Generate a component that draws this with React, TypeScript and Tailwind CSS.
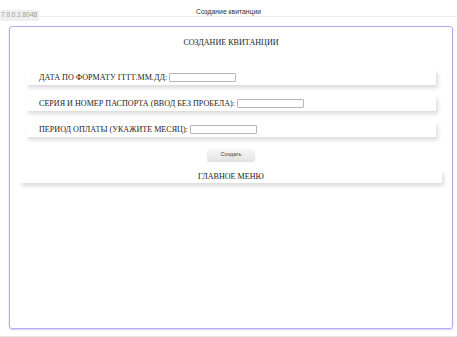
import React from "react";

const serif = { fontFamily: '"Liberation Serif", "Times New Roman", serif' };

function FieldRow({ label, inputW }: { label: string; inputW: string }) {
  return (
    <div className="mx-[16px] flex h-[15px] items-center bg-white pl-[13px] shadow-[2px_3px_4px_rgba(0,0,0,0.14)]">
      <span className="text-[8.1px] leading-none text-[#222]">{label}</span>
      <input
        type="text"
        className={`ml-[2px] h-[9px] ${inputW} rounded-[1px] border border-[#b5b5b5] bg-white outline-none`}
      />
    </div>
  );
}

export default function App() {
  return (
    <div className="flex h-[337px] w-[457px] flex-col overflow-hidden bg-white" style={serif}>
      {/* browser-ish header */}
      <div
        className="grid h-[17px] shrink-0 grid-cols-[1fr_auto_1fr] items-center border-b border-[#ececec]"
        style={{ fontFamily: '"Liberation Sans", Arial, sans-serif' }}
      >
        <div>
          <span className="inline-block rounded-[2px] bg-[#efefef] py-[2px] pl-[1px] pr-[2px] text-[6.5px] leading-none text-[#9a9a9a]">
            7.0.0.1:8048
          </span>
        </div>
        <span className="text-[6.8px] leading-none text-[#333]">Создание квитанции</span>
        <div />
      </div>

      <div className="ml-[9px] mr-[4px] mt-[9px] h-[303px] shrink-0 rounded-[3px] border border-[#b6a9f2] shadow-[0_1px_2px_rgba(120,100,220,0.35)]">
        <div className="pt-[12px] text-center text-[8.1px] leading-none text-[#222]">
          СОЗДАНИЕ КВИТАНЦИИ
        </div>

        <div className="mt-[23px] flex flex-col gap-[11px]">
          <FieldRow label="ДАТА ПО ФОРМАТУ ГГГГ.ММ.ДД:" inputW="w-[67px]" />
          <FieldRow label="СЕРИЯ И НОМЕР ПАСПОРТА (ВВОД БЕЗ ПРОБЕЛА):" inputW="w-[67px]" />
          <FieldRow label="ПЕРИОД ОПЛАТЫ (УКАЖИТЕ МЕСЯЦ):" inputW="w-[67px]" />
        </div>

        <div className="mt-[12px] flex justify-center">
          <button
            className="h-[12px] w-[48px] rounded-[2px] bg-gradient-to-b from-[#f7f7f7] to-[#e3e3e3] text-[5.5px] leading-none text-[#444] shadow-[0_1px_1px_rgba(0,0,0,0.12)]"
            style={{ fontFamily: '"Liberation Sans", Arial, sans-serif' }}
          >
            Создать
          </button>
        </div>

        <div className="mx-[10px] mt-[9px] flex h-[13px] items-center justify-center bg-white text-[8.1px] leading-none text-[#222] shadow-[2px_3px_4px_rgba(0,0,0,0.14)]">
          ГЛАВНОЕ МЕНЮ
        </div>
      </div>

      <div className="mt-auto h-[1px] shrink-0 bg-[#e6e6e6]" />
    </div>
  );
}
